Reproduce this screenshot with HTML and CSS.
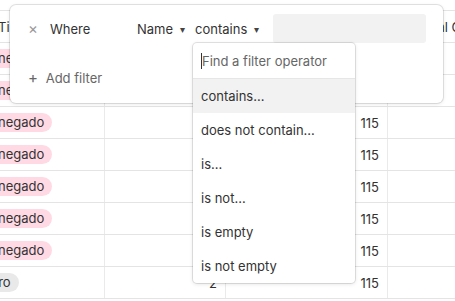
FILE: index.html
```html
<!DOCTYPE html>
<html lang="en">
<head>
  <meta charset="UTF-8" />
  <meta name="viewport" content="width=device-width, initial-scale=1.0"/>
  <title>Filter</title>
  <link rel="stylesheet" href="styles.css">
</head>
<body>
  <div class="grid">
    <div class="row head">
      <div class="cell">Tipo</div>
      <div class="cell">Cantidad</div>
      <div class="cell">Precio</div>
      <div class="cell last">Total Cobrado</div>
    </div>
    <div class="row">
      <div class="cell"><span class="pill red">Denegado</span></div>
      <div class="cell num">2</div>
      <div class="cell num">115</div>
      <div class="cell"></div>
    </div>
    <div class="row">
      <div class="cell"><span class="pill red">Denegado</span></div>
      <div class="cell num">2</div>
      <div class="cell num">115</div>
      <div class="cell"></div>
    </div>
    <div class="row">
      <div class="cell"><span class="pill red">Denegado</span></div>
      <div class="cell num">2</div>
      <div class="cell num">115</div>
      <div class="cell"></div>
    </div>
    <div class="row">
      <div class="cell"><span class="pill red">Denegado</span></div>
      <div class="cell num">2</div>
      <div class="cell num">115</div>
      <div class="cell"></div>
    </div>
    <div class="row">
      <div class="cell"><span class="pill red">Denegado</span></div>
      <div class="cell num">2</div>
      <div class="cell num">115</div>
      <div class="cell"></div>
    </div>
    <div class="row">
      <div class="cell"><span class="pill red">Denegado</span></div>
      <div class="cell num">2</div>
      <div class="cell num">115</div>
      <div class="cell"></div>
    </div>
    <div class="row">
      <div class="cell"><span class="pill red">Denegado</span></div>
      <div class="cell num">2</div>
      <div class="cell num">115</div>
      <div class="cell"></div>
    </div>
    <div class="row">
      <div class="cell"><span class="pill grey">Otro</span></div>
      <div class="cell num">2</div>
      <div class="cell num">115</div>
      <div class="cell"></div>
    </div>
  </div>

  <div class="filter-panel">
    <div class="filter-row">
      <span class="remove">&#215;</span>
      <span class="where">Where</span>
      <span class="select name">Name <span class="arrow">&#9662;</span></span>
      <span class="select op">contains <span class="arrow">&#9662;</span></span>
      <div class="value"></div>
    </div>
    <div class="add-filter"><span class="plus">+</span> Add filter</div>
  </div>

  <div class="operators">
    <div class="search"><span class="caret"></span>Find a filter operator</div>
    <div class="option active">contains...</div>
    <div class="option">does not contain...</div>
    <div class="option">is...</div>
    <div class="option">is not...</div>
    <div class="option">is empty</div>
    <div class="option">is not empty</div>
  </div>
</body>
</html>
```

FILE: styles.css
```css
body {
  font-family: Inter, "Liberation Sans", sans-serif;
  font-size: 13px;
  color: #333;
  background-color: white;
  margin: 0;
  overflow: hidden;
}

/* table behind the popups */
.grid {
  margin-left: -30px;
  padding-top: 10px;
}
.row {
  display: grid;
  grid-template-columns: 135px 121px 162px 160px;
  height: 32px;
  border-bottom: 1px solid #e4e4e4;
  box-sizing: border-box;
}
.row.head {
  border-top: 1px solid #e4e4e4;
  height: 33px;
}
.cell {
  display: flex;
  align-items: center;
  border-right: 1px solid #eaeaea;
  padding: 0 8px 0 3px;
  white-space: nowrap;
  overflow: hidden;
}
.head .cell { padding-left: 28px; }
.head .cell.last { padding-left: 30px; }
.cell.num { justify-content: flex-end; }
.pill {
  border-radius: 10px;
  padding: 1px 8px 2px;
  line-height: 16px;
}
.pill.red { background-color: #ffdae4; }
.pill.grey {
  background-color: #e9e9e9;
  margin-left: 3px;
}

/* filter panel */
.filter-panel {
  position: absolute;
  left: 10px;
  top: 5px;
  width: 433px;
  height: 98px;
  background-color: white;
  border-radius: 6px;
  box-shadow: 0 0 0 1px rgba(0,0,0,0.1), 0 1px 4px rgba(0,0,0,0.1);
  box-sizing: border-box;
  padding: 9px 17px 0 18px;
}
.filter-row {
  display: flex;
  align-items: center;
  height: 29px;
}
.remove {
  color: #999;
  font-size: 15px;
  width: 22px;
}
.where { width: 87px; }
.select {
  display: flex;
  align-items: center;
  gap: 7px;
}
.select.name { margin-right: 10px; }
.select.op { margin-right: 14px; }
.arrow {
  font-size: 10px;
  color: #444;
}
.value {
  flex: 1;
  height: 29px;
  background-color: #f2f2f2;
  border-radius: 3px;
}
.add-filter {
  margin-top: 25px;
  color: #666;
}
.plus {
  display: inline-block;
  width: 14px;
  font-size: 15px;
}

/* operator dropdown */
.operators {
  position: absolute;
  left: 193px;
  top: 43px;
  width: 162px;
  background-color: white;
  border-radius: 4px;
  box-shadow: 0 0 0 1px rgba(0,0,0,0.1), 0 1px 4px rgba(0,0,0,0.12);
  overflow: hidden;
}
.search {
  display: flex;
  align-items: center;
  height: 35px;
  padding-left: 8px;
  color: #666;
  border-bottom: 1px solid #e6e6e6;
}
.caret {
  width: 1px;
  height: 16px;
  background-color: #333;
}
.option {
  height: 34px;
  line-height: 34px;
  padding-left: 8px;
}
.option.active { background-color: #f2f2f2; }
```
